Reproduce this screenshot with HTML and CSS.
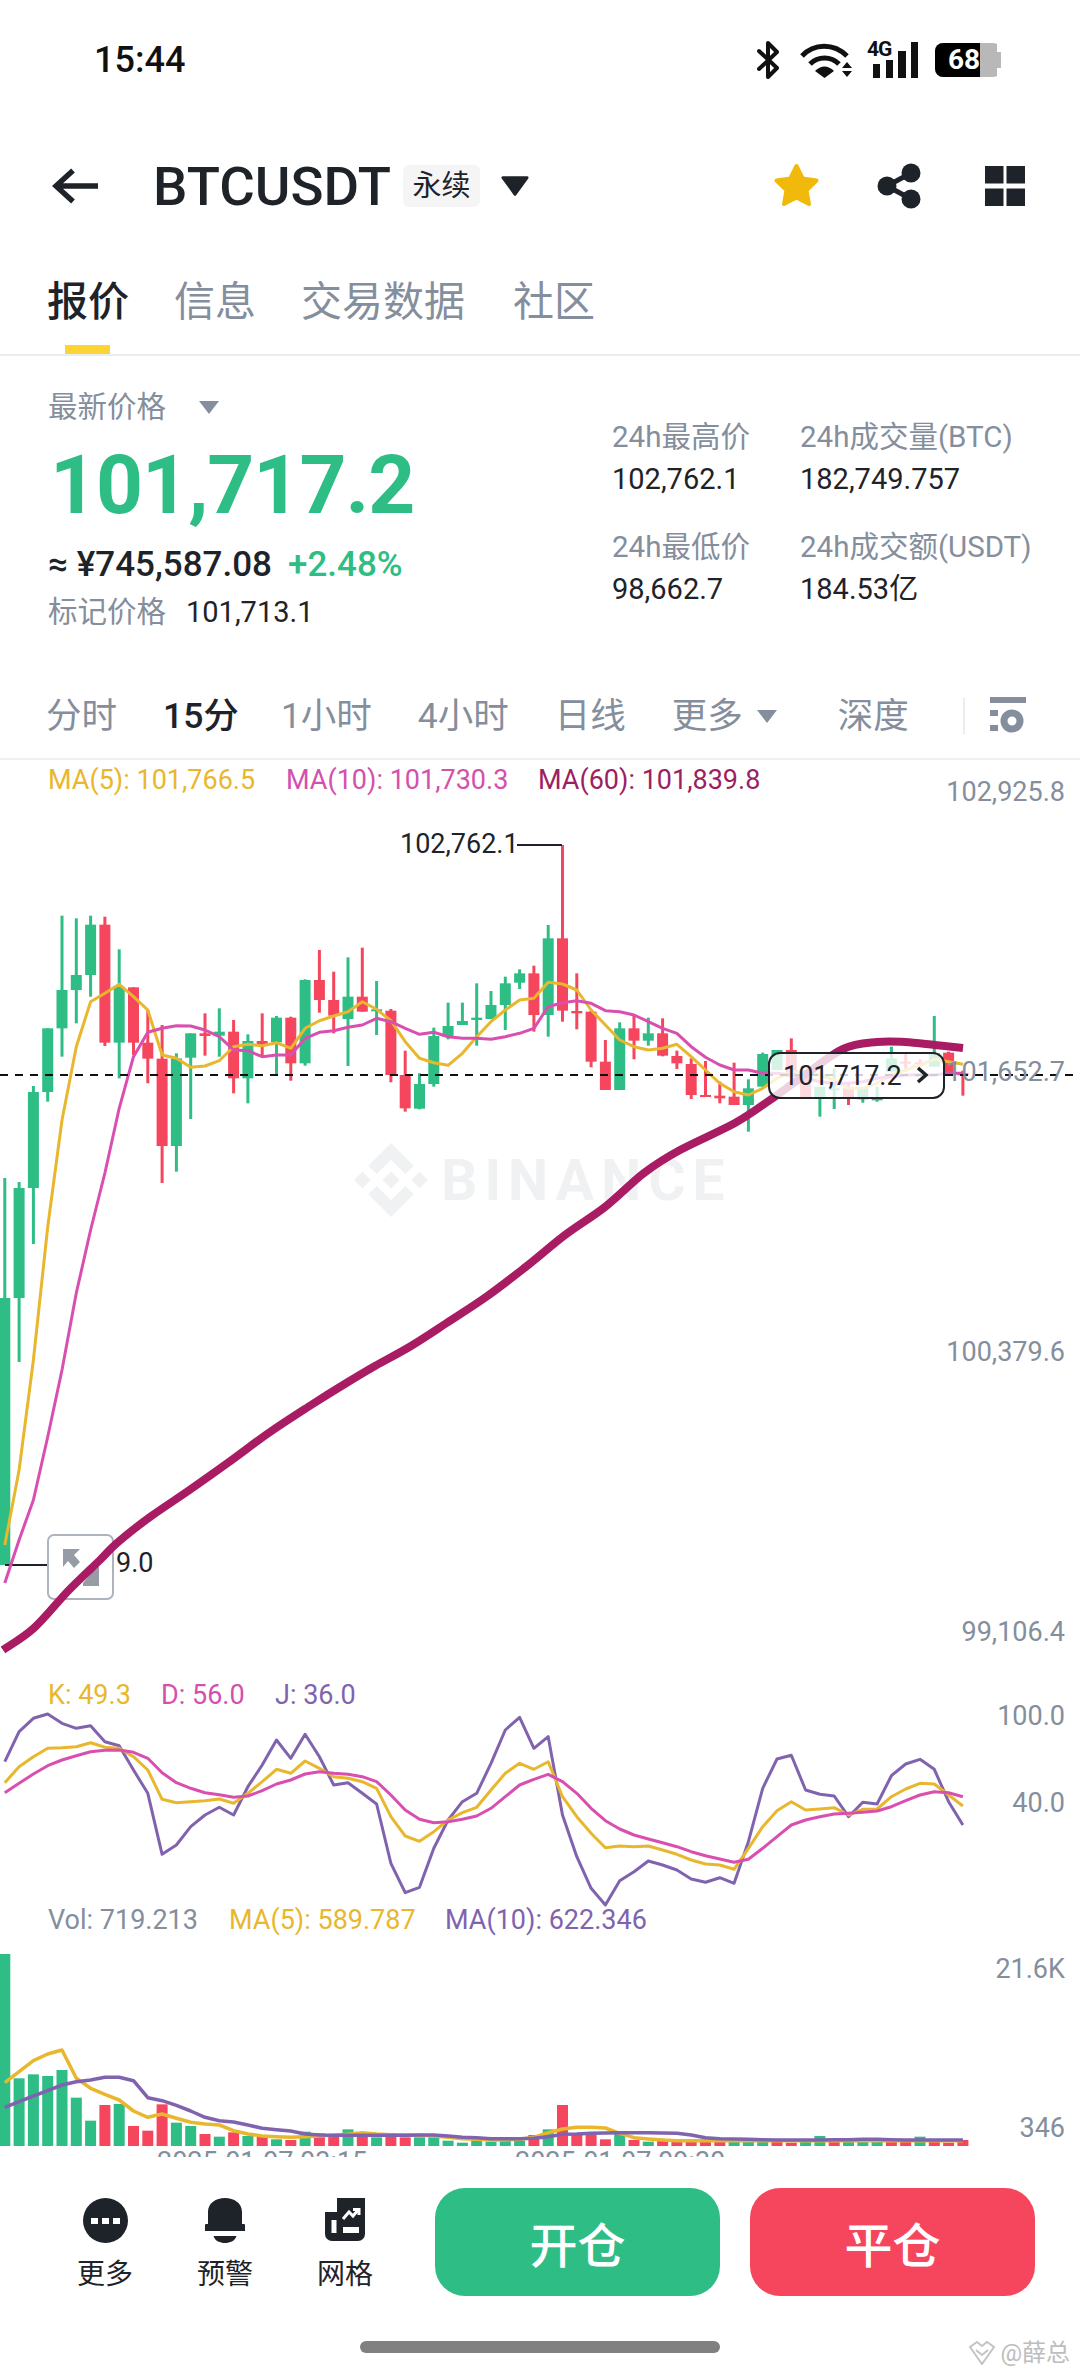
FILE: index.html
```html
<!DOCTYPE html>
<html lang="zh-CN">
<head>
<meta charset="utf-8">
<title>BTCUSDT</title>
<link rel="stylesheet" href="styles.css">
</head>
<body>
<div class="page">
  <div class="status">
    <span class="clock">15:44</span>
    <div class="status-icons">
      <svg class="ic-bt" width="22" height="38" viewBox="0 0 22 38"><path d="M2 10 L20 27 L11 36 V2 L20 11 L2 28" fill="none" stroke="#111" stroke-width="4" stroke-linejoin="round" stroke-linecap="round"/></svg>
      <svg class="ic-wifi" width="52" height="36" viewBox="0 0 52 36"><g fill="none" stroke="#111" stroke-width="5"><path d="M2 14 C14 1 34 1 47 14"/><path d="M10 22 C18 14 31 14 39 22"/></g><path d="M15 29 C21 23 28 23 34 29 L24.500 36 Z" fill="#111"/><path d="M42 26 L47 20 L52 26Z M42 29 L52 29 L47 35Z" fill="#111"/></svg>
      <div class="signal">
        <span class="net">4G</span>
        <svg width="46" height="36" viewBox="0 0 46 36" class="bars"><path d="M0 22H7V36H0Z M13 18H20V36H13Z M25 9H33V36H25Z M38 0H45V36H38Z" fill="#111"/></svg>
      </div>
      <div class="battery"><span class="batt-level"></span><span class="batt-num">68</span></div>
    </div>
  </div>

  <header class="header">
    <svg class="back" width="46" height="36" viewBox="0 0 46 36"><path d="M46 18H6M21 2.500L4 18L21 33.500" fill="none" stroke="#1e2329" stroke-width="5.500"/></svg>
    <h1 class="symbol">BTCUSDT</h1>
    <span class="badge">永续</span>
    <svg class="drop" width="28" height="22" viewBox="0 0 30 22"><path d="M2 2H28L15 20Z" fill="#1e2329" stroke="#1e2329" stroke-width="3" stroke-linejoin="round"/></svg>
    <div class="header-actions">
      <svg class="star" width="47" height="46" viewBox="0 0 47 46"><path d="M23.500 3L29.700 15.500L43.500 17.500L33.500 27.200L36 41L23.500 34.500L11 41L13.500 27.200L3.500 17.500L17.300 15.500Z" fill="#f0b90b" stroke="#f0b90b" stroke-width="4" stroke-linejoin="round"/></svg>
      <svg class="share" width="44" height="46" viewBox="0 0 44 46"><path d="M34 10L10 23L34 36" fill="none" stroke="#1e2329" stroke-width="5"/><circle cx="34" cy="10" r="9.500" fill="#1e2329"/><circle cx="10" cy="23" r="9.500" fill="#1e2329"/><circle cx="34" cy="36" r="9.500" fill="#1e2329"/></svg>
      <svg class="apps" width="40" height="40" viewBox="0 0 40 40"><path d="M0 0H18.500V17.500H0Z M21.500 0H40V17.500H21.500Z M0 22.500H18.500V40H0Z M21.500 22.500H40V40H21.500Z" fill="#1e2329"/></svg>
    </div>
  </header>

  <nav class="tabs">
    <span class="tab tab-on">报价</span>
    <span class="tab">信息</span>
    <span class="tab tab-data">交易数据</span>
    <span class="tab">社区</span>
  </nav>

  <section class="stats">
    <div class="stats-left">
      <div class="price-label"><span>最新价格</span><svg width="20" height="13" viewBox="0 0 20 13"><path d="M0 0H20L10 13Z" fill="#848e9c"/></svg></div>
      <div class="price">101,717.2</div>
      <div class="fiat"><span class="fiat-val">≈ ¥745,587.08</span><span class="pct">+2.48%</span></div>
      <div class="mark-row"><span class="muted">标记价格</span><span class="mark-val">101,713.1</span></div>
    </div>
    <div class="stats-grid">
      <div class="cell"><div class="muted">24h最高价</div><div class="cell-val">102,762.1</div></div>
      <div class="cell"><div class="muted">24h成交量(BTC)</div><div class="cell-val">182,749.757</div></div>
      <div class="cell"><div class="muted">24h最低价</div><div class="cell-val">98,662.7</div></div>
      <div class="cell"><div class="muted">24h成交额(USDT)</div><div class="cell-val">184.53亿</div></div>
    </div>
  </section>

  <div class="ktabs">
    <span>分时</span>
    <span class="k-on">15分</span>
    <span>1小时</span>
    <span>4小时</span>
    <span>日线</span>
    <span class="k-more">更多<svg width="20" height="13" viewBox="0 0 20 13"><path d="M0 0H20L10 13Z" fill="#848e9c"/></svg></span>
    <span class="k-depth">深度</span>
    <i class="k-div"></i>
    <svg class="k-set" width="36" height="38" viewBox="0 0 36 38"><path d="M0 0H36V6H0Z M0 13H8V19H0Z M0 28H8V34H0Z" fill="#848e9c"/><circle cx="22" cy="24" r="8" fill="none" stroke="#848e9c" stroke-width="7"/></svg>
  </div>

  <div class="chart">
    <svg class="plot" width="1080" height="1397" viewBox="0 760 1080 1397">
      <g class="wm">
        <svg x="354" y="1143" width="74" height="74" viewBox="0 0 32 32"><path d="M9.785 13.443L16 7.229l6.217 6.217 3.617-3.617L16 0 6.168 9.832l3.617 3.611zM0 16l3.617-3.617L7.233 16l-3.617 3.617zm9.785 2.557L16 24.771l6.217-6.217 3.618 3.615L16 32l-9.832-9.832-.005-.005 3.622-3.606zM24.767 16l3.617-3.617L32 16l-3.617 3.617zm-5.098-.002L16 12.326l-2.712 2.712-.312.312-.642.642L16 19.676l3.669-3.678z"/></svg>
        <text class="wm-text" x="441" y="1200">BINANCE</text>
      </g>
      <g id="candles"></g>
      <g id="volume"></g>
      <path class="lead" d="M5 1565H48"/>
      <text class="dark" x="116" y="1572">9.0</text>
      <rect class="reset" x="48" y="1535" width="65" height="64" rx="6"/>
      <path class="reset-ic" d="M63 1549H80L74 1555L80 1562L74 1568L68 1561L63 1567Z M99 1567V1586H83L83 1583L96 1567Z"/>
      <g id="lines"></g>
      <path class="dash" d="M0 1075H1080"/>
      <path class="lead" d="M517 845H562"/>
      <text class="dark" x="400" y="853">102,762.1</text>

      <text class="leg c-y" x="48" y="789">MA(5): 101,766.5</text>
      <text class="leg c-p" x="286" y="789">MA(10): 101,730.3</text>
      <text class="leg c-m" x="538" y="789">MA(60): 101,839.8</text>
      <text class="axis" x="1065" y="801">102,925.8</text>
      <text class="axis" x="1065" y="1081">101,652.7</text>
      <text class="axis" x="1065" y="1361">100,379.6</text>
      <text class="axis" x="1065" y="1641">99,106.4</text>

      <text class="leg c-y" x="48" y="1704">K: 49.3</text>
      <text class="leg c-p" x="161" y="1704">D: 56.0</text>
      <text class="leg c-v" x="275" y="1704">J: 36.0</text>
      <text class="axis" x="1065" y="1725">100.0</text>
      <text class="axis" x="1065" y="1812">40.0</text>

      <text class="leg c-g" x="48" y="1929">Vol: 719.213</text>
      <text class="leg c-y" x="229" y="1929">MA(5): 589.787</text>
      <text class="leg c-v" x="445" y="1929">MA(10): 622.346</text>
      <text class="axis" x="1065" y="1978">21.6K</text>
      <text class="axis" x="1065" y="2137">346</text>

      <text class="time" x="157" y="2171">2025-01-07 03:15</text>
      <text class="time" x="515" y="2171">2025-01-07 09:30</text>

      <rect class="pill" x="769" y="1053" width="175" height="45" rx="11"/>
      <text class="pill-text" x="783" y="1085">101,717.2</text>
      <path class="pill-arrow" d="M918 1068L926 1075L918 1082"/>
    </svg>
  </div>

  <footer class="footer">
    <div class="actions">
      <div class="nav">
        <div class="nav-item">
          <svg width="45" height="45" viewBox="0 0 45 45"><circle cx="22.500" cy="22.500" r="22.500" fill="#1e2329"/><path d="M8 20H15V26H8Z M19 20H26V26H19Z M30 20H37V26H30Z" fill="#fff"/></svg>
          <span>更多</span>
        </div>
        <div class="nav-item">
          <svg width="40" height="45" viewBox="0 0 40 45"><path d="M3 27V14C3 5 11 0 20 0S37 5 37 14V27Z M1 26H39a1 1 0 0 1 1 1V33H0V27a1 1 0 0 1 1-1Z M8.500 38H31.500C30 43 25 45 20 45S10 43 8.500 38Z" fill="#1e2329"/></svg>
          <span>预警</span>
        </div>
        <div class="nav-item">
          <svg width="40" height="45" viewBox="0 0 40 45"><path d="M12 0H40V36a7 7 0 0 1-7 7H7a7 7 0 0 1-7-7V14H12Z" fill="#1e2329"/><path d="M6.500 22H11.500V35H6.500Z M18 29H34V35H18Z" fill="#fff"/><path d="M18 21L24 14L28 18L33 12M28 11.500H34V17" fill="none" stroke="#fff" stroke-width="3"/></svg>
          <span>网格</span>
        </div>
      </div>
      <button class="btn btn-open">开仓</button>
      <button class="btn btn-close">平仓</button>
    </div>
    <div class="home-bar"></div>
    <div class="sign">
      <svg width="28" height="24" viewBox="0 0 28 24"><path d="M2 6L9 1L14 5L19 1L26 6L14 23Z M8 9L14 14L20 9" fill="none" stroke="#c4c4c4" stroke-width="2"/></svg>
      <span>@薛总</span>
    </div>
  </footer>
</div>
<script src="script.js"></script>
</body>
</html>
```

FILE: styles.css
```css
* { box-sizing: border-box; margin: 0; padding: 0; }
html, body { background: #fff; }
body { font-family: Roboto, "Noto Sans CJK SC", sans-serif; color: #1e2329; }
.page { position: relative; width: 1080px; height: 2374px; overflow: hidden; }

.status { height: 116px; display: flex; align-items: center; justify-content: space-between; padding: 3px 79px 0 94px; }
.clock { font-size: 36px; font-weight: 500; color: #111; line-height: 1; }
.status-icons { display: flex; align-items: center; gap: 21px; }
.signal { position: relative; width: 46px; height: 36px; margin-left: -6px; margin-right: 1px; }
.net { position: absolute; left: 0; top: -3px; font-size: 21px; font-weight: 700; letter-spacing: -1px; color: #111; line-height: 21px; }
.bars { position: absolute; left: 6px; top: 0; }
.battery { position: relative; width: 66px; height: 34px; background: linear-gradient(#b8b8b8, #b8b8b8) 0 0 / 62px 100% no-repeat, linear-gradient(#b8b8b8, #b8b8b8) 62px 9px / 4px 16px no-repeat; border-radius: 8px; }
.batt-level { position: absolute; left: 0; top: 0; bottom: 0; width: 45px; background: #000; border-radius: 8px 0 0 8px; }
.batt-num { position: absolute; left: 13px; top: 0; font-size: 28px; font-weight: 700; line-height: 34px; color: #fff; }

.header { height: 140px; display: flex; align-items: center; padding: 0 55px 0 52px; }
.symbol { margin-left: 55px; font-size: 54.500px; font-weight: 500; line-height: 60px; letter-spacing: 0; }
.badge { margin-left: 12px; width: 77px; height: 42px; background: #f5f5f5; border-radius: 6px; font-size: 29px; line-height: 42px; text-align: center; }
.drop { margin-left: 21px; }
.header-actions { margin-left: auto; display: flex; align-items: center; gap: 57px; }
.share { margin-left: 0; margin-right: 7px; }

.tabs { height: 100px; display: flex; padding: 21px 0 0 47px; gap: 45px; border-bottom: 2px solid #eaecef; }
.tab { position: relative; font-size: 41px; line-height: 50px; color: #848e9c; }
.tab-on { color: #1e2329; font-weight: 500; }
.tab-on::after { content: ""; position: absolute; left: 18px; top: 68px; width: 45px; height: 9px; background: #fcd535; }
.tab-data { margin-right: 3px; }

.stats { display: flex; padding: 31px 0 0 48px; height: 324px; }
.stats-left { width: 564px; }
.muted { color: #848e9c; font-size: 29.500px; line-height: 40px; }
.price-label { display: flex; align-items: center; gap: 33px; color: #848e9c; font-size: 29.500px; line-height: 40px; }
.price { margin-top: 8px; margin-left: 2px; font-size: 82px; font-weight: 700; line-height: 100px; color: #2ebd85; letter-spacing: -1px; }
.fiat { margin-top: 5px; display: flex; gap: 16px; font-size: 35px; font-weight: 500; line-height: 50px; }
.pct { color: #2ebd85; }
.mark-row { display: flex; gap: 20px; align-items: center; height: 44px; }
.mark-val, .cell-val { font-size: 29px; line-height: 44px; }
.stats-grid { margin-top: 30px; display: grid; grid-template-columns: 188px auto; grid-template-rows: 85px 85px; row-gap: 25px; }

.ktabs { height: 80px; display: flex; align-items: center; gap: 46px; padding: 0 0 6px 46px; border-bottom: 2px solid #eff0f2; font-size: 35.500px; color: #848e9c; line-height: 40px; }
.k-on { color: #1e2329; font-weight: 500; margin-right: -4px; }
.k-more { display: flex; align-items: center; gap: 14px; }
.k-depth { margin-left: 15px; }
.k-div { margin-left: 8px; width: 2px; height: 36px; background: #eaecef; }
.k-set { margin-left: -21px; }

.chart { height: 1397px; overflow: hidden; }
.plot { display: block; }
.plot text { font-family: Roboto, sans-serif; font-size: 27px; }
.wm { fill: #f0f1f2; }
.plot .wm-text { font-size: 57px; font-weight: 700; letter-spacing: 7px; }
.lead { stroke: #1e2329; stroke-width: 2; fill: none; }
.dark { fill: #1e2329; }
.reset { fill: #fff; stroke: #aeb4bc; stroke-width: 2; }
.reset-ic { fill: #969ca6; }
.dash { stroke: #111; stroke-width: 2; stroke-dasharray: 8 7; fill: none; }
.c-y { fill: #e8b72e; }
.c-p { fill: #d350ae; }
.c-m { fill: #9c1f64; }
.c-v { fill: #8063ae; }
.c-g { fill: #848e9c; }
.axis { fill: #848e9c; text-anchor: end; }
.time { fill: #848e9c; }
.pill { fill: rgba(255,255,255,.8); stroke: #1e2329; stroke-width: 2; }
.pill-text { fill: #1e2329; }
.pill-arrow { fill: none; stroke: #1e2329; stroke-width: 3.500; }

.footer { height: 217px; }
.actions { display: flex; align-items: flex-start; padding: 31px 45px 0 45px; }
.nav { display: flex; width: 390px; }
.nav-item { width: 120px; padding-top: 10px; display: flex; flex-direction: column; align-items: center; gap: 12px; }
.nav-item span { font-size: 28px; line-height: 40px; }
.btn { width: 285px; height: 108px; border: 0; border-radius: 30px; color: #fff; font: 500 48px/108px "Noto Sans CJK SC", sans-serif; }
.btn-open { background: #2ebd85; }
.btn-close { background: #f6465d; margin-left: 30px; }
.home-bar { margin: 45px auto 0; width: 360px; height: 12px; border-radius: 6px; background: #808080; }
.sign { position: absolute; right: 10px; bottom: 8px; display: flex; align-items: center; gap: 4px; color: #bdbdbd; font-size: 24px; line-height: 26px; }
```

FILE: script.js
```js
var NS = 'http://www.w3.org/2000/svg';
var GREEN = '#2ebd85', RED = '#f6465d';
function X(i) { return 4.8 + 14.3 * i; }
function Y(s) { return 780 + s / 3; }
function el(parent, tag, attrs) {
  var n = document.createElementNS(NS, tag);
  for (var k in attrs) n.setAttribute(k, attrs[k]);
  parent.appendChild(n);
  return n;
}
// colour, high, top, bottom, low (in 3x crop rows from y = 780)
var C = [
['g',1194,1554,2355,2355],['g',1206,1224,1554,1746],['g',918,936,1224,1392],['g',745,745,936,965],
['g',407,630,745,830],['g',415,585,630,730],['g',407,434,585,650],['r',410,434,788,798],
['g',508,620,788,895],['r',622,622,788,825],['r',690,788,836,910],['r',735,836,1098,1209],
['g',820,835,1098,1175],['g',760,760,833,1017],['r',700,760,768,827],['g',685,755,767,830],
['r',720,755,895,940],['g',763,783,895,970],['r',700,783,793,830],['g',708,713,787,888],
['r',710,713,850,902],['g',598,600,850,857],['r',510,600,660,698],['r',575,660,707,760],
['g',532,650,717,858],['r',503,650,695,695],['g',603,688,693,765],['r',687,692,885,907],
['r',812,885,985,995],['g',880,912,986,988],['g',743,768,912,920],['g',668,738,770,778],
['g',668,723,735,735],['g',610,713,720,797],['g',633,675,717,717],['g',590,610,675,750],
['g',568,580,608,627],['r',557,580,705,755],['g',435,475,705,770],['r',195,475,692,725],
['r',580,693,700,748],['r',693,695,845,862],['r',780,845,930,930],['g',727,745,930,930],
['r',705,745,782,838],['g',713,760,782,797],['r',715,760,827,829],['r',812,828,850,867],
['r',835,852,945,957],['r',843,945,951,951],['r',905,947,955,970],['r',848,950,975,975],
['g',898,925,975,1055],['g',818,822,920,920],['g',810,810,870,870],['r',775,810,890,890],
['r',890,890,955,955],['g',920,920,955,1010],['g',865,925,930,987],['r',905,925,955,975],
['g',925,925,958,968],['g',920,955,958,965],['g',800,835,875,875],['r',818,845,850,875],
['r',838,847,852,860],['g',708,820,860,860],['r',815,818,878,880],['r',872,880,885,947]
];
var g = document.getElementById('candles');
C.forEach(function (c, i) {
  var col = c[0] === 'g' ? GREEN : RED, x = X(i);
  el(g, 'rect', { x: x - 1.5, y: Y(c[1]), width: 3, height: (c[4] - c[1]) / 3, fill: col });
  el(g, 'rect', { x: x - 5.5, y: Y(c[2]), width: 11, height: Math.max((c[3] - c[2]) / 3, 2), fill: col });
});
// volume
var V = 'g102 g475 g463 g468 g450 g533 g602 r555 g552 r618 r632 r553 g608 g618 r642 g650 r637 g648 r650 g658 r660 g635 r640 r650 g628 r640 g652 r640 r652 g652 g652 g662 g668 g662 g665 g662 g662 r645 g628 r555 r645 r645 r658 g640 r660 g665 r662 r665 r665 r662 r662 g660 g660 g665 r662 r668 g665 g648 r660 g660 g660 g660 r665 r665 g650 r665 r668 r660'.split(' ');
var vg = document.getElementById('volume');
V.forEach(function (v, i) {
  var top = 1920 + parseInt(v.slice(1), 10) / 3;
  el(vg, 'rect', { x: X(i) - 5.5, y: top, width: 11, height: 2146 - top, fill: v[0] === 'g' ? GREEN : RED });
});
// moving averages and KDJ
function line(parent, pts, color, w) {
  el(parent, 'polyline', { points: pts.map(function (p) { return p[0].toFixed(1) + ',' + p[1].toFixed(1); }).join(' '), fill: 'none', stroke: color, 'stroke-width': w, 'stroke-linejoin': 'round' });
}
function smooth(parent, pts, color, w) {
  var d = 'M' + pts[0][0] + ' ' + pts[0][1];
  for (var i = 0; i < pts.length - 1; i++) {
    var p0 = pts[Math.max(i - 1, 0)], p1 = pts[i], p2 = pts[i + 1], p3 = pts[Math.min(i + 2, pts.length - 1)];
    d += 'C' + (p1[0] + (p2[0] - p0[0]) / 6).toFixed(1) + ' ' + (p1[1] + (p2[1] - p0[1]) / 6).toFixed(1) + ' ' +
      (p2[0] - (p3[0] - p1[0]) / 6).toFixed(1) + ' ' + (p2[1] - (p3[1] - p1[1]) / 6).toFixed(1) + ' ' + p2[0] + ' ' + p2[1];
  }
  el(parent, 'path', { d: d, fill: 'none', stroke: color, 'stroke-width': w });
}
function series(ys, f) { return ys.map(function (s, i) { return [X(i), f(s, i)]; }); }
var L = document.getElementById('lines');
var YEL = '#e8b72e', PNK = '#d94fb0', PUR = '#8063ae';
var ma5 = [2295,2070,1740,1341,1020,800,665,640,613,650,690,825,835,862,858,842,800,793,797,788,805,745,722,708,695,665,688,722,785,835,848,856,820,770,725,690,660,655,607,612,630,690,735,780,800,810,805,793,830,870,910,935,945,925,895,875,875,885,900,925,925,910,885,870,855,838,845,853];
var ma10 = [2409,2280,2160,1971,1770,1539,1350,1179,985,830,757,745,737,738,750,770,810,812,830,825,825,775,757,752,742,735,715,725,745,763,757,770,775,775,778,770,760,745,680,668,662,670,692,695,705,725,745,760,800,832,855,870,870,880,880,885,895,905,910,910,905,895,890,885,885,885,880,880];
var ma60 = [[3,1650],[34,1628],[69,1590],[100,1560],[117,1543],[150,1517],[189.5,1490],[229,1462],[268.6,1433],[308,1407],[348,1382],[375,1366],[411,1346],[446.6,1323],[486,1297],[525.6,1267],[565,1235],[605,1207],[644,1173],[680,1150],[735,1123],[770,1100],[802,1077],[843,1049],[877,1042],[905,1042],[935,1045],[963,1048]];
line(L, series(ma5, Y), YEL, 3);
line(L, series(ma10, Y), PNK, 3);
smooth(L, ma60, '#a91c63', 8);
function kdj(a, b) { return a.map(function (s) { return 1500 + s / 3; }).concat(b.map(function (s) { return 1640 + s / 3; })).map(function (y, i) { return [X(i), y]; }); }
line(L, kdj([785,695,655,642,670,685,677,725,737,810,880,1063,1035,980,945,922,945,860,795,720,775,703,770,855,848,880,912,1090,1178,1162,1045,960,905,880,790,690,652,745],[290,525,650,745,795,722,695,663,675,690,717,727,713,730,605,445,357,346,450,463,468,530,487,492,407,372,358,388,485,555]), PUR, 3);
line(L, kdj([848,800,770,745,743,740,728,742,745,770,810,898,908,905,902,897,910,880,845,808,820,783,805,830,835,845,865,950,1008,1024,995,960,938,922,870,820,790,808],[365,470,530,580,623,618,620,618,630,643,660,672,675,688,625,560,512,485,510,507,503,525,508,507,470,447,430,432,465,498]), YEL, 3);
line(L, kdj([878,850,822,797,780,767,755,751,750,757,775,818,848,865,878,884,892,888,872,852,840,822,815,820,823,830,845,885,930,958,968,965,958,948,925,890,855,838],[403,425,460,505,542,567,585,597,608,620,635,647,657,667,658,625,590,555,540,530,522,520,517,513,500,482,465,455,458,470]), PNK, 3);
function vol(s) { return 1920 + s / 3; }
var vy = [158,125,92,72,60,145,175,193,210,243,262,252,265,277,282,285,302,312,318,320,322,320,318,316,313,308,312,314,315,316,318,322,326,328,330].map(function (s) { return s + 330; }).concat([660,658,652,638,627,622,622,624,640,653,657,660,662,662,662,662,662,662,662,662,662,662,662,662,662,662,662,662,662,662,662,662,662]);
var vp = [232,215,198,182,165,155,150,142,142,152,203,212,226,243,262,272,276,285,295,299,303,312,315,316,316,316,316,316,316,315,315,318,322,323,326].map(function (s) { return s + 330; }).concat([656,656,655,650,643,642,640,639,638,638,638,639,640,645,653,656,657,658,659,660,660,660,660,659,659,658,658,659,660,660,660,660,660]);
line(L, series(vy, vol), YEL, 3.5);
line(L, series(vp, vol), PUR, 3.5);
```
